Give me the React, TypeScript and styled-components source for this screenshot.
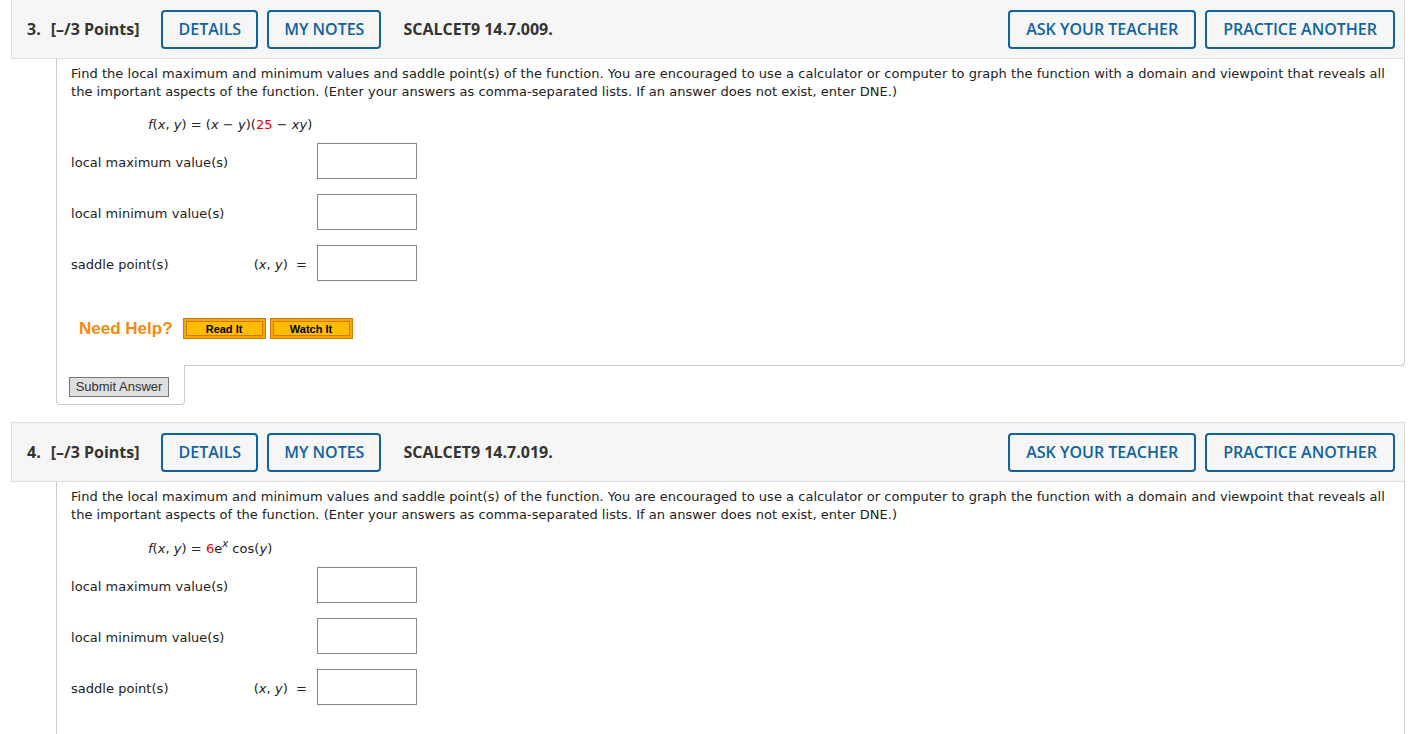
import React from 'react';
import styled, { createGlobalStyle } from 'styled-components';

const GlobalStyle = createGlobalStyle`
    body {
        margin: 0;
        background: #fff;
        font-family: 'DejaVu Sans', Verdana, sans-serif;
        color: #222;
    }
`;

const BLUE = '#0f63a1';

const Page = styled.div`
    padding: 0 11px;
    margin-top: -1px;
`;

const Question = styled.section`
    margin-bottom: 17px;
`;

const Header = styled.div`
    display: flex;
    align-items: center;
    box-sizing: border-box;
    height: 60px;
    padding: 0 9px 0 15px;
    background: #f6f6f6;
    border: 1px solid #dedede;
    font-family: 'Open Sans', sans-serif;
`;

const QNumber = styled.span`
    font-size: 16px;
    font-weight: 700;
    color: #333;
    margin-right: 10px;
`;

const Points = styled.span`
    font-size: 16px;
    font-weight: 700;
    color: #333;
    margin-right: 22px;
`;

const HeaderButton = styled.button<{ gapAfter?: number; wide?: boolean }>`
    box-sizing: border-box;
    height: 39px;
    padding: 0 ${(p) => (p.wide ? 16 : 15)}px;
    margin-right: ${(p) => p.gapAfter ?? 9}px;
    background: transparent;
    border: 2px solid ${BLUE};
    border-radius: 4px;
    color: ${BLUE};
    font-family: 'Open Sans', sans-serif;
    font-size: 16px;
    font-weight: 600;
    white-space: nowrap;
    cursor: pointer;
`;

const Code = styled.span`
    font-size: 16px;
    font-weight: 700;
    color: #333;
`;

const Spacer = styled.div`
    flex: 1;
`;

const Body = styled.div`
    margin-left: 45px;
    border: 1px solid #ccc;
    border-top: none;
    border-radius: 0 0 4px 0;
    padding: 6px 13px 0 14px;
    font-size: 13px;
    line-height: 18px;
    letter-spacing: 0.03px;
`;

const Prompt = styled.p`
    margin: 0;
`;

const Formula = styled.div<{ raised?: boolean }>`
    margin: ${(p) => (p.raised ? 16 : 15)}px 0 9px 77px;
`;

const Var = styled.i``;

const Sup = styled.sup`
    font-size: 10px;
    line-height: 0;
    vertical-align: 6px;
`;

const Red = styled.span`
    color: #e00;
`;

const Answers = styled.div`
    display: grid;
    grid-template-columns: 160px 86px 100px;
    row-gap: 15px;
    align-items: center;
`;

const Label = styled.span`
    padding-top: 3px;
    white-space: nowrap;
`;

const Prefix = styled.span`
    padding: 3px 10px 0 0;
    text-align: right;
    white-space: nowrap;
`;

const AnswerBox = styled.input`
    box-sizing: border-box;
    width: 100px;
    height: 36px;
    margin: 0;
    border: 1px solid #888;
    background: #fff;
`;

const HelpRow = styled.div`
    display: flex;
    align-items: center;
    gap: 4px;
    margin-top: 37px;
    padding: 0 0 26px 8px;
`;

const NeedHelp = styled.span`
    font-family: 'Liberation Sans', Arial, sans-serif;
    font-weight: 700;
    font-size: 17px;
    letter-spacing: 0;
    color: #f7890d;
    margin-right: 6px;
`;

const HelpButton = styled.button`
    box-sizing: border-box;
    width: 83px;
    height: 21px;
    padding: 0;
    background: #ffbd00;
    border: 1px solid #cf7a0a;
    box-shadow: inset 0 0 0 2px #f9a400, inset 0 0 0 3px #cf7a0a;
    font-family: 'Liberation Sans', Arial, sans-serif;
    font-weight: 700;
    font-size: 11px;
    color: #000;
`;

const SubmitTab = styled.div`
    position: relative;
    box-sizing: border-box;
    width: 129px;
    height: 40px;
    margin: -1px 0 0 45px;
    padding: 11px 0 0 12px;
    background: #fff;
    border: 1px solid #ccc;
    border-top: none;
    border-radius: 0 0 4px 4px;
`;

const SubmitButton = styled.button`
    box-sizing: border-box;
    width: 100px;
    height: 20px;
    padding: 0;
    background: #dedede;
    border: 1px solid #777;
    font-family: 'Liberation Sans', Arial, sans-serif;
    font-size: 13px;
    color: #333;
`;

const PROMPT =
    'Find the local maximum and minimum values and saddle point(s) of the function. You are encouraged to use a calculator or computer to graph the function with a domain and viewpoint that reveals all the important aspects of the function. (Enter your answers as comma-separated lists. If an answer does not exist, enter DNE.)';

type QuestionProps = {
    num: number;
    code: string;
    formula: React.ReactNode;
    last?: boolean;
};

const QuestionBlock = ({ num, code, formula, last = false }: QuestionProps) => (
    <Question>
        <Header>
            <QNumber>{num}.</QNumber>
            <Points>[–/3 Points]</Points>
            <HeaderButton gapAfter={9}>DETAILS</HeaderButton>
            <HeaderButton gapAfter={22}>MY NOTES</HeaderButton>
            <Code>{code}</Code>
            <Spacer />
            <HeaderButton wide>ASK YOUR TEACHER</HeaderButton>
            <HeaderButton wide gapAfter={0}>
                PRACTICE ANOTHER
            </HeaderButton>
        </Header>
        <Body>
            <Prompt>{PROMPT}</Prompt>
            <Formula raised={last}>{formula}</Formula>
            <Answers>
                <Label>local maximum value(s)</Label>
                <Prefix />
                <AnswerBox />
                <Label>local minimum value(s)</Label>
                <Prefix />
                <AnswerBox />
                <Label>saddle point(s)</Label>
                <Prefix>
                    (<Var>x</Var>, <Var>y</Var>)&nbsp; =
                </Prefix>
                <AnswerBox />
            </Answers>
            {last ? (
                <HelpRow />
            ) : (
                <HelpRow>
                    <NeedHelp>Need Help?</NeedHelp>
                    <HelpButton>Read It</HelpButton>
                    <HelpButton>Watch It</HelpButton>
                </HelpRow>
            )}
        </Body>
        {!last && (
            <SubmitTab>
                <SubmitButton>Submit Answer</SubmitButton>
            </SubmitTab>
        )}
    </Question>
);

export default function App() {
    return (
        <Page>
            <GlobalStyle />
            <QuestionBlock
                num={3}
                code="SCALCET9 14.7.009."
                formula={
                    <>
                        <Var>f</Var>(<Var>x</Var>, <Var>y</Var>) = (<Var>x</Var> − <Var>y</Var>)(<Red>25</Red> − <Var>xy</Var>)
                    </>
                }
            />
            <QuestionBlock
                num={4}
                code="SCALCET9 14.7.019."
                last
                formula={
                    <>
                        <Var>f</Var>(<Var>x</Var>, <Var>y</Var>) = <Red>6</Red>e
                        <Sup>
                            <Var>x</Var>
                        </Sup>{' '}
                        cos(<Var>y</Var>)
                    </>
                }
            />
        </Page>
    );
}
